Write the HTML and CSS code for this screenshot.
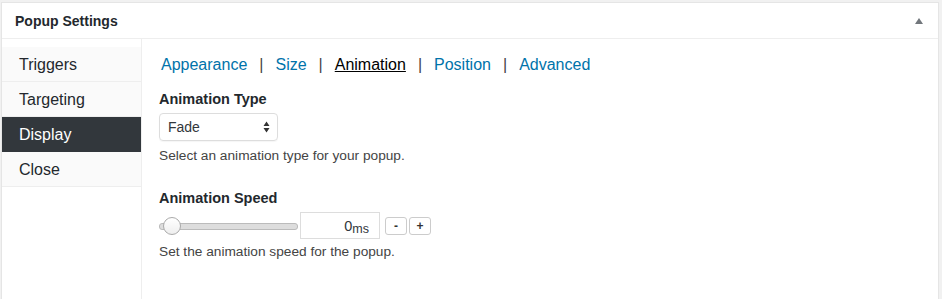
FILE: index.html
```html
<!DOCTYPE html>
<html lang="en">
<head>
    <meta charset="UTF-8">
    <meta name="viewport" content="width=device-width, initial-scale=1.0">
    <title>Popup Settings</title>
    <link rel="stylesheet" href="styles.css">
</head>
<body>
    <div class="postbox">
        <div class="postbox-header">
            <h2>Popup Settings</h2>
            <span class="toggle-indicator"></span>
        </div>
        <div class="postbox-inside">
            <ul class="tabs">
                <li><a href="#">Triggers</a></li>
                <li><a href="#">Targeting</a></li>
                <li class="active"><a href="#">Display</a></li>
                <li><a href="#">Close</a></li>
            </ul>
            <div class="tab-content">
                <div class="subtabs">
                    <a href="#">Appearance</a>
                    <span class="sep">|</span>
                    <a href="#">Size</a>
                    <span class="sep">|</span>
                    <a href="#" class="current">Animation</a>
                    <span class="sep">|</span>
                    <a href="#">Position</a>
                    <span class="sep">|</span>
                    <a href="#">Advanced</a>
                </div>
                <div class="field">
                    <label for="animation_type">Animation Type</label>
                    <div class="select-box">
                        <span>Fade</span>
                        <svg width="7" height="12" viewBox="0 0 7 12"><path d="M3.5 0.5 L6.5 5 H0.5 Z M3.5 11.5 L6.5 7 H0.5 Z" fill="#333"/></svg>
                    </div>
                    <p class="desc">Select an animation type for your popup.</p>
                </div>
                <div class="field">
                    <label for="animation_speed">Animation Speed</label>
                    <div class="range-row">
                        <div class="range">
                            <div class="range-track"></div>
                            <div class="range-thumb"></div>
                        </div>
                        <div class="range-value"><span class="num">0</span><span class="unit">ms</span></div>
                        <button class="step">-</button>
                        <button class="step">+</button>
                    </div>
                    <p class="desc">Set the animation speed for the popup.</p>
                </div>
            </div>
        </div>
    </div>
</body>
</html>
```

FILE: styles.css
```css
body {
    margin: 0;
    padding: 2px 3px 0 1px;
    background: #f1f1f1;
    font-family: "Liberation Sans", Arial, sans-serif;
    color: #444;
}
.postbox {
    background: #fff;
    border: 1px solid #e5e5e5;
    height: 300px;
    display: flex;
    flex-direction: column;
}
.postbox-header {
    height: 35px;
    border-bottom: 1px solid #eee;
    display: flex;
    align-items: center;
    justify-content: space-between;
    padding: 0 15px 0 13px;
}
.postbox-header h2 {
    margin: 0;
    font-size: 14px;
    font-weight: bold;
    color: #23282d;
}
.toggle-indicator {
    width: 0;
    height: 0;
    border-left: 4px solid transparent;
    border-right: 4px solid transparent;
    border-bottom: 6px solid #72777c;
    margin-top: 1px;
}
.postbox-inside {
    flex: 1;
    display: flex;
}
.tabs {
    list-style: none;
    margin: 0;
    padding: 8px 0 0;
    width: 139px;
    border-right: 1px solid #eee;
}
.tabs li {
    background: #fafafa;
    border-bottom: 1px solid #eee;
    height: 34px;
}
.tabs li a {
    display: block;
    line-height: 35px;
    padding-left: 17px;
    font-size: 16px;
    color: #23282d;
    text-decoration: none;
}
.tabs li.active {
    background: #32373c;
    border-bottom-color: #32373c;
}
.tabs li.active a {
    color: #fff;
}
.tab-content {
    flex: 1;
    padding: 16px 17px;
}
.subtabs {
    font-size: 16px;
    display: flex;
    gap: 12px;
    color: #444;
    height: 20px;
    align-items: center;
    margin-left: 2px;
}
.subtabs a {
    color: #0073aa;
    text-decoration: none;
}
.subtabs a.current {
    color: #000;
    text-decoration: underline;
}
.field {
    margin-top: 16px;
}
.field + .field {
    margin-top: 27px;
}
.field label {
    display: block;
    font-size: 14.5px;
    font-weight: bold;
    color: #23282d;
    margin-bottom: 6px;
}
.select-box {
    width: 102px;
    height: 26px;
    border: 1px solid #ddd;
    border-radius: 4px;
    display: flex;
    align-items: center;
    justify-content: space-between;
    padding: 0 7px 0 8px;
    font-size: 14px;
    color: #32373c;
    box-shadow: 0 1px 1px rgba(0, 0, 0, 0.04);
}
.desc {
    margin: 7px 0 0;
    font-size: 13.7px;
    color: #444;
}
.range-row {
    display: flex;
    align-items: center;
    height: 27px;
}
.range-row + .desc {
    margin-top: 5px;
}
.range {
    position: relative;
    width: 139px;
    height: 18px;
}
.range-track {
    position: absolute;
    left: 0;
    right: 0;
    top: 6px;
    height: 5px;
    background: #ddd;
    border: 1px solid #bbb;
    border-radius: 3px;
}
.range-thumb {
    position: absolute;
    left: 4px;
    top: 0;
    width: 16px;
    height: 16px;
    border-radius: 50%;
    background: linear-gradient(#fff, #eee);
    border: 1px solid #aaa;
}
.range-value {
    width: 68px;
    height: 25px;
    border: 1px solid #ddd;
    margin-left: 2px;
    display: flex;
    align-items: center;
    justify-content: flex-end;
    padding-right: 10px;
    font-size: 14.5px;
    color: #32373c;
}
.range-value .unit {
    font-size: 12.5px;
    margin-top: 6px;
}
.step {
    height: 18px;
    min-width: 22px;
    margin-left: 5px;
    padding: 0 5px;
    border: 1px solid #ccc;
    border-radius: 3px;
    background: #fff;
    font-family: "Liberation Sans", Arial, sans-serif;
    font-size: 12px;
    font-weight: bold;
    color: #333;
    line-height: 16px;
}
.step + .step {
    margin-left: 2px;
}
```
